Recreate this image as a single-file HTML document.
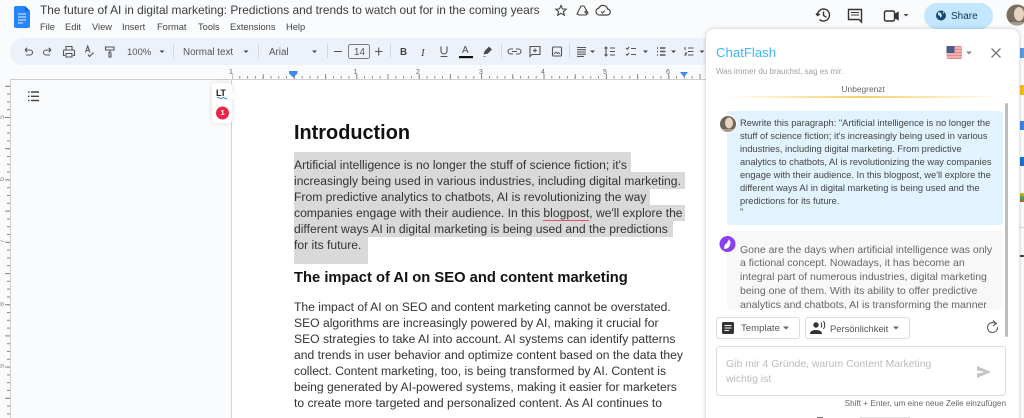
<!DOCTYPE html>
<html><head><meta charset="utf-8"><style>
html,body{margin:0;padding:0;width:1024px;height:418px;overflow:hidden;background:#f9fbfd;font-family:"Liberation Sans",sans-serif}
#r{position:absolute;left:0;top:0;width:1024px;height:418px;overflow:hidden;filter:blur(.35px)}
.a,.t{position:absolute;white-space:nowrap}
.t{line-height:14px;height:14px}
svg{position:absolute;left:0;top:0}
.m{font-size:9.3px;color:#444;top:20px}
.d{font-size:12.13px;color:#333;left:294px;line-height:16px;height:16px}
.c{font-size:9.32px;color:#444;left:740px}
.g{font-size:10.5px;color:#666;left:740px}
.s{position:absolute;background:#d9d9d9}
.sep{position:absolute;top:44px;width:1px;height:14px;background:#d5d9de}
.tb{font-size:9.8px;color:#555;top:46px}
.nm{font-size:7px;color:#666;top:66px}
</style></head><body><div id="r">

<!-- page -->
<div class="a" style="left:232px;top:80px;width:792px;height:338px;background:#fff"></div>
<div class="a" style="left:1019px;top:0;width:5px;height:418px;background:#f9fbfd"></div>
<div class="a" style="left:10px;top:79px;width:1009px;height:1px;background:#cfcfcf"></div>
<div class="a" style="left:231px;top:79px;width:1px;height:339px;background:#d4d4d4"></div>
<div class="a" style="left:10px;top:80px;width:1px;height:338px;background:#cfcfcf"></div>

<!-- doc icon + title -->
<svg width="1024" height="418">
<path d="M16 6h9l5 5v15a2 2 0 0 1-2 2H16a2 2 0 0 1-2-2V8a2 2 0 0 1 2-2z" fill="#2684fc"/>
<path d="M25 6l5 5h-5z" fill="#0f62d6"/>
<path d="M18 14h8M18 17h8M18 20h8M18 23h5" stroke="#fff" stroke-width="1.1" fill="none" opacity=".9"/>
<!-- title right icons -->
<path d="M561 5.5l1.5 3.4 3.7.3-2.8 2.4.9 3.600-3.300-1.900-3.300 1.900.9-3.600-2.800-2.400 3.700-.3z" fill="none" stroke="#444" stroke-width="1.1"/>
<path d="M577 14l4-8h3l4 7-2 2h-7z M584 12h4M586 10v4" fill="none" stroke="#444" stroke-width="1.1"/>
<path d="M600 15h7a3 3 0 0 0 .5-6 4.500 4.500 0 0 0-8.500-1 3.500 3.500 0 0 0 1 7z" fill="none" stroke="#444" stroke-width="1.2"/>
<path d="M601 11.500l1.500 1.500 2.500-2.500" fill="none" stroke="#444" stroke-width="1"/>
<!-- toolbar pill -->
<rect x="10" y="38" width="720" height="27" rx="13" fill="#edf2fa"/>
<g fill="none" stroke="#555" stroke-width="1.1">
<path d="M25 50h5a2.500 2.500 0 0 1 0 5h-4M25 50l2.200-2.200M25 50l2.200 2.200"/>
<path d="M51 50h-5a2.500 2.500 0 0 0 0 5h4M51 50l-2.200-2.200M51 50l-2.200 2.200"/>
<path d="M66 50v-3.500h6V50M65 55.500h-1.500V51a1 1 0 0 1 1-1h9a1 1 0 0 1 1 1v4.500H73M66 53.500h6v3.500h-6z"/>
<path d="M85.500 52.500l2.200-6.500 2.300 6.500M86.300 50.500h3M88 54.500l1.500 2 4-4"/>
<path d="M105.500 47h8.500v3h-8.500zM110 50v2.500h-1V57h2v-4.500"/>
<path d="M334 51.500h8M375 51.500h7.500M378.700 47.500v8"/>
<rect x="348.500" y="44.500" width="21" height="14" rx="2" stroke="#777" stroke-width=".9"/>
<path d="M441 46.500v4.500a3 3 0 0 0 6 0v-4.500M440.500 56.500h7"/>
<path d="M513 49h-2.500a2.500 2.500 0 0 0 0 5h2.500M516 49h2.500a2.500 2.500 0 0 1 0 5H516M512 51.500h5"/>
<path d="M530 46.500h10v8h-8l-2 2zM535 48.500v4M533 50.500h4"/>
<rect x="552.500" y="47" width="9" height="9" rx="1"/>
<path d="M554 54l2-2 1.500 1.500 1-1 1.500 1.500" stroke-width=".9"/>
</g>
<path d="M484 54l1-3 4-4 2.500 2.500-4 4zM483 56.500h3" fill="#474747" stroke="#474747" stroke-width=".6"/>
<rect x="459" y="56" width="14" height="2.200" fill="#111"/>
<g fill="#474747">
<path d="M159.500 50.500h5l-2.500 2.500z"/><path d="M243.500 50.500h5l-2.500 2.500z"/><path d="M312 50.500h5l-2.500 2.500z"/>
<path d="M590 50.500h5l-2.500 2.500z"/><path d="M643 50.500h5l-2.500 2.500z"/><path d="M671 50.500h5l-2.500 2.500z"/><path d="M699.500 50.500h5l-2.500 2.500z"/>
</g>
<g stroke="#555" stroke-width="1.100" fill="none">
<path d="M577 47.500h9M577 49.700h9M577 52h9M577 54.200h9M577 56.400h7"/>
<path d="M606 47v9M604.500 48.500l1.500-1.500 1.500 1.500M604.500 54.500l1.500 1.500 1.500-1.500M610 48h5M610 51.500h5M610 55h5"/>
<path d="M626 48l1.200 1.200 2-2.200M626 54l1.200 1.200 2-2.200M631 48.500h5M631 54.500h5"/>
<path d="M657 48h1M657 51.500h1M657 55h1M660 48h5.500M660 51.500h5.500M660 55h5.500" stroke-width="1.400"/>
<path d="M685 47v3M685 53h1.500l-1.500 2h1.500M688 48h5.500M688 51.500h5.500M688 55h5.500"/>
</g>
<!-- rulers -->
<defs>
<pattern id="h1" x="231.500" y="0" width="7.8" height="80" patternUnits="userSpaceOnUse"><rect width="1" height="2.500" y="76" fill="#8a8a8a"/></pattern>
<pattern id="h2" x="231.500" y="0" width="31.200" height="80" patternUnits="userSpaceOnUse"><rect width="1" height="5" y="74" fill="#8a8a8a"/></pattern>
<pattern id="v1" x="0" y="117" width="10" height="7.800" patternUnits="userSpaceOnUse"><rect width="3" height="1" x="7" fill="#8a8a8a"/></pattern>
<pattern id="v2" x="0" y="117" width="10" height="31.200" patternUnits="userSpaceOnUse"><rect width="5" height="1" x="5" fill="#8a8a8a"/></pattern>
</defs>
<rect x="232" y="72" width="474" height="7" fill="url(#h1)"/>
<rect x="232" y="72" width="474" height="7" fill="url(#h2)"/>
<rect x="0" y="80" width="10" height="338" fill="url(#v1)"/>
<rect x="0" y="80" width="10" height="338" fill="url(#v2)"/>
<path d="M289 71h8.500v2.500l-4.250 4-4.250-4z" fill="#4285f4"/>
<path d="M680 72h8l-4 5z" fill="#4285f4"/>
<path d="M28 92h1.500M28 96.300h1.500M28 100.500h1.500M31 92h8M31 96.300h8M31 100.500h8" stroke="#444" stroke-width="1.400"/>
<g fill="none" stroke="#333" stroke-width="1.400">
<path d="M817.500 15a6 6 0 1 1 2 4.500M816 13.500l1.700 2 2-1.700M823.500 11.500v4l3 1.700"/>
<path d="M848.500 9.500h13v12.500l-2.500-2.500h-10.500z"/><path d="M851 12.500h8M851 15h8" stroke-width="1.100"/>
<rect x="884.500" y="11" width="10" height="10" rx="1.500"/><path d="M895 14.500l3-2v7l-3-2" fill="#333"/>
</g>
<path d="M903.500 14h5l-2.500 2.500z" fill="#444"/>
<rect x="924" y="3" width="69" height="26" rx="13" fill="#c2e7ff"/>
<circle cx="941" cy="15.500" r="5" fill="#1c4a70"/>
<path d="M938 12l3 1 1 3-2 2v-2l-2-1zM943 11.500l1.500 1-1 1.500z" fill="#c2e7ff"/>
</svg>

<div class="t" style="left:40px;top:3px;font-size:11.9px;color:#3c3c3c">The future of AI in digital marketing: Predictions and trends to watch out for in the coming years</div>
<div class="t m" style="left:40px">File</div><div class="t m" style="left:65px">Edit</div><div class="t m" style="left:92px">View</div><div class="t m" style="left:122px">Insert</div><div class="t m" style="left:157px">Format</div><div class="t m" style="left:198px">Tools</div><div class="t m" style="left:230px">Extensions</div><div class="t m" style="left:286px">Help</div>
<div class="t" style="left:951px;top:10px;font-size:10px;color:#14324e">Share</div>

<div class="t tb" style="left:127px;font-size:9.500px">100%</div>
<div class="sep" style="left:173px"></div>
<div class="t tb" style="left:183px">Normal text</div>
<div class="sep" style="left:258px"></div>
<div class="t tb" style="left:269px">Arial</div>
<div class="sep" style="left:327px"></div>
<div class="t tb" style="left:354px">14</div>
<div class="sep" style="left:390px"></div>
<div class="t tb" style="left:400px;font-weight:bold;color:#444">B</div>
<div class="t tb" style="left:421px;font-style:italic;font-family:'Liberation Serif',serif;font-size:11px;color:#444">I</div>
<div class="t tb" style="left:462px;color:#444;top:44px">A</div>
<div class="sep" style="left:501px"></div>
<div class="sep" style="left:569px"></div>

<div class="t nm" style="left:229px">1</div><div class="t nm" style="left:353.500px">1</div><div class="t nm" style="left:416px">2</div><div class="t nm" style="left:479px">3</div><div class="t nm" style="left:541px">4</div><div class="t nm" style="left:603px">5</div><div class="t nm" style="left:666px">6</div>
<div class="t" style="left:1px;top:110px;font-size:7px;color:#888;transform:rotate(-90deg)">5</div>
<div class="t" style="left:1px;top:172px;font-size:7px;color:#888;transform:rotate(-90deg)">6</div>
<div class="t" style="left:1px;top:234px;font-size:7px;color:#888;transform:rotate(-90deg)">7</div>
<div class="t" style="left:1px;top:297px;font-size:7px;color:#888;transform:rotate(-90deg)">8</div>
<div class="t" style="left:1px;top:359px;font-size:7px;color:#888;transform:rotate(-90deg)">9</div>

<!-- avatar top -->
<svg width="1024" height="418"><defs><clipPath id="av"><circle cx="1017" cy="15" r="10.500"/></clipPath></defs>
<g clip-path="url(#av)"><rect x="1005" y="4" width="24" height="22" fill="#7a6f5f"/><ellipse cx="1019" cy="14" rx="5" ry="7" fill="#e6d3c2"/><rect x="1011" y="22" width="16" height="5" fill="#a89a8a"/></g></svg>

<!-- LT widget -->
<div class="a" style="left:212px;top:83px;width:20px;height:40px;background:#fff;border-radius:3px;box-shadow:0 0 6px rgba(0,0,0,.12)"></div>
<div class="a" style="left:229px;top:92px;width:6px;height:6px;background:#fff;transform:rotate(45deg)"></div>
<div class="t" style="left:216px;top:86px;font-size:9px;font-weight:bold;color:#222;letter-spacing:-.5px">LT</div>
<svg width="1024" height="418"><path d="M217 98q1.300-1.500 2.500 0t2.500 0 2.500 0 2.500 0" stroke="#3f8fe0" stroke-width="1" fill="none"/><circle cx="222.500" cy="113" r="6.500" fill="#e8274b"/></svg>
<div class="t" style="left:220.500px;top:106px;font-size:7.500px;font-weight:bold;color:#fff">1</div>

<!-- document text -->
<div class="t" style="left:294px;top:122px;height:22px;line-height:22px;font-size:19.900px;font-weight:bold;color:#111">Introduction</div>
<div class="s" style="left:294px;top:152px;width:337px;height:20px"></div>
<div class="s" style="left:294px;top:172px;width:391px;height:17px"></div>
<div class="s" style="left:294px;top:189px;width:356px;height:16px"></div>
<div class="s" style="left:294px;top:205px;width:391px;height:16px"></div>
<div class="s" style="left:294px;top:221px;width:379px;height:16px"></div>
<div class="s" style="left:294px;top:237px;width:74px;height:27px"></div>
<div class="t d" style="top:157px">Artificial intelligence is no longer the stuff of science fiction; it's</div>
<div class="t d" style="top:173px">increasingly being used in various industries, including digital marketing.</div>
<div class="t d" style="top:189px">From predictive analytics to chatbots, AI is revolutionizing the way</div>
<div class="t d" style="top:205px">companies engage with their audience. In this <span style="border-bottom:1px solid #e0556e">blogpost</span>, we'll explore the</div>
<div class="t d" style="top:221px">different ways AI in digital marketing is being used and the predictions</div>
<div class="t d" style="top:237px">for its future.</div>
<div class="t" style="left:294px;top:269px;height:18px;line-height:18px;font-size:14.750px;font-weight:bold;color:#111">The impact of AI on SEO and content marketing</div>
<div class="t d" style="top:299px">The impact of AI on SEO and content marketing cannot be overstated.</div>
<div class="t d" style="top:315px">SEO algorithms are increasingly powered by AI, making it crucial for</div>
<div class="t d" style="top:331px">SEO strategies to take AI into account. AI systems can identify patterns</div>
<div class="t d" style="top:347px">and trends in user behavior and optimize content based on the data they</div>
<div class="t d" style="top:363px">collect. Content marketing, too, is being transformed by AI. Content is</div>
<div class="t d" style="top:379px">being generated by AI-powered systems, making it easier for marketers</div>
<div class="t d" style="top:395px">to create more targeted and personalized content. As AI continues to</div>

<!-- sidebar icons -->
<div class="a" style="left:1020px;top:121px;width:4px;height:9px;background:#3b82e8"></div>
<div class="a" style="left:1020px;top:157px;width:4px;height:9px;background:#1a6fd8"></div>
<div class="a" style="left:1020px;top:193px;width:4px;height:9px;background:linear-gradient(#f0b42a,#34a853 60%,#e05040)"></div>
<div class="a" style="left:1020px;top:85px;width:4px;height:10px;background:#f5b820"></div>
<div class="a" style="left:1020px;top:48px;width:4px;height:10px;background:#5a9ae8"></div>
<div class="a" style="left:1019px;top:227px;width:5px;height:1px;background:#ddd"></div>
<div class="a" style="left:1020px;top:255px;width:4px;height:2px;background:#444"></div>

<!-- panel -->
<div class="a" style="left:706px;top:29px;width:313px;height:400px;background:#fff;border-radius:8px;box-shadow:0 0 5px rgba(0,0,0,.22)"></div>
<div class="t" style="left:716px;top:46px;font-size:13.200px;color:#3db5fb">ChatFlash</div>
<div class="t" style="left:716px;top:65px;font-size:8px;color:#a0a0a0">Was immer du brauchst, sag es mir.</div>
<div class="t" style="left:841.500px;top:82px;font-size:8.400px;color:#666">Unbegrenzt</div>
<div class="a" style="left:725px;top:96px;width:276px;height:2px;background:linear-gradient(90deg,#fff,#f6d067 50%,#fff)"></div>
<div class="a" style="left:1005px;top:103px;width:3px;height:234px;background:#bdbdbd;border-radius:2px"></div>

<svg width="1024" height="418">
<rect x="946.500" y="46" width="15.500" height="13" rx="1.500" fill="#e88a8a"/>
<path d="M946.500 48h15.500M946.500 51h15.500M946.500 54h15.500M946.500 57h15.500" stroke="#f6d8d8" stroke-width="1"/>
<rect x="946.500" y="46" width="8" height="7" fill="#4a5a8a"/>
<path d="M966 51.500h6l-3 3z" fill="#888"/>
<path d="M991.500 48.500l9 9M1000.500 48.500l-9 9" stroke="#777" stroke-width="1.300"/>
</svg>

<!-- bubbles -->
<div class="a" style="left:727px;top:111px;width:276px;height:114px;background:#e0f3fe;border-radius:3px"></div>
<div class="a" style="left:727px;top:231px;width:276px;height:78px;background:#f8f8f8;border-radius:3px"></div>
<svg width="1024" height="418"><defs><clipPath id="av2"><circle cx="728" cy="124" r="8"/></clipPath></defs>
<circle cx="728" cy="124" r="9" fill="#fff"/>
<g clip-path="url(#av2)"><rect x="719" y="115" width="18" height="18" fill="#6f6558"/><ellipse cx="729" cy="123" rx="4" ry="5.500" fill="#e6d3c2"/><rect x="722" y="129" width="13" height="4" fill="#a89a8a"/></g></svg>
<div class="t c" style="top:116px">Rewrite this paragraph: "Artificial intelligence is no longer the</div>
<div class="t c" style="top:129px">stuff of science fiction; it's increasingly being used in various</div>
<div class="t c" style="top:142px">industries, including digital marketing. From predictive</div>
<div class="t c" style="top:155px">analytics to chatbots, AI is revolutionizing the way companies</div>
<div class="t c" style="top:168px">engage with their audience. In this blogpost, we'll explore the</div>
<div class="t c" style="top:181px">different ways AI in digital marketing is being used and the</div>
<div class="t c" style="top:194px">predictions for its future.</div>
<div class="t c" style="top:205px">"</div>

<svg width="1024" height="418">
<circle cx="727.500" cy="244" r="8" fill="#8b3ff0"/>
<path d="M724 249c0-3 1-5 3-6l2-4 1 3 1-1-1 4c-1 3-3 4-6 4z" fill="#fff"/>
</svg>
<div class="t g" style="top:243px">Gone are the days when artificial intelligence was only</div>
<div class="t g" style="top:256px">a fictional concept. Nowadays, it has become an</div>
<div class="t g" style="top:270px">integral part of numerous industries, digital marketing</div>
<div class="t g" style="top:284px">being one of them. With its ability to offer predictive</div>
<div class="t g" style="top:298px">analytics and chatbots, AI is transforming the manner</div>

<!-- buttons -->
<div class="a" style="left:716px;top:317px;width:84px;height:22px;box-sizing:border-box;border:1px solid #ddd;border-radius:3px;background:#fff"></div>
<div class="a" style="left:805px;top:317px;width:105px;height:22px;box-sizing:border-box;border:1px solid #ddd;border-radius:3px;background:#fff"></div>
<div class="t" style="left:741px;top:322px;font-size:9.600px;color:#555">Template</div>
<div class="t" style="left:830px;top:322px;font-size:9.400px;color:#555">Persönlichkeit</div>
<svg width="1024" height="418">
<rect x="722" y="322" width="12" height="12" rx="1.500" fill="#333"/>
<path d="M724.500 325.500h7M724.500 328h7M724.500 330.500h4.500" stroke="#fff" stroke-width="1"/>
<path d="M783 326.500h6l-3 3zM893 326.500h6l-3 3z" fill="#666"/>
<circle cx="816" cy="325" r="2.700" fill="#333"/>
<path d="M810 334c0-3 3-4 6-4s6 1 6 4z" fill="#333"/>
<path d="M821 322.500q1.500 2.500 0 5M823.500 321q2.500 4 0 8" stroke="#333" stroke-width="1" fill="none"/>
<path d="M997.500 327a5 5 0 1 1-2-3.500M993 320.500l3.500 3-3.500 2.500" stroke="#666" stroke-width="1.200" fill="none"/>
</svg>

<!-- input -->
<div class="a" style="left:716px;top:346px;width:290px;height:50px;box-sizing:border-box;border:1px solid #ddd;border-radius:3px;background:#fff"></div>
<div class="t" style="left:726px;top:358px;font-size:10.450px;color:#bbb">Gib mir 4 Gründe, warum Content Marketing</div>
<div class="t" style="left:726px;top:373px;font-size:10.450px;color:#bbb">wichtig ist</div>
<svg width="1024" height="418"><path d="M977 366l14 6-14 6v-4.500l8-1.500-8-1.500z" fill="#c4c4c4"/></svg>
<div class="t" style="right:18px;top:397px;font-size:8.200px;color:#666">Shift + Enter, um eine neue Zeile einzufügen</div>
<div class="a" style="left:817px;top:417px;width:6px;height:1px;background:#777"></div>
<div class="a" style="left:860px;top:417px;width:50px;height:1px;background:#ddd"></div>
</div></body></html>
